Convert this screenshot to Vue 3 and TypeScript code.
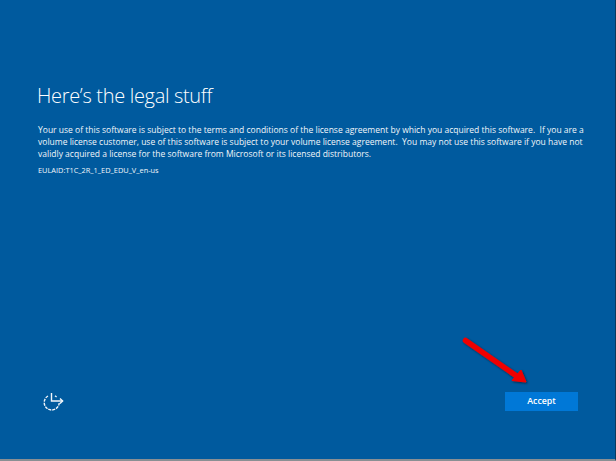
<script setup lang="ts">
const paragraph =
  "Your use of this software is subject to the terms and conditions of the license agreement by which you acquired this software.  If you are a volume license customer, use of this software is subject to your volume license agreement.  You may not use this software if you have not validly acquired a license for the software from Microsoft or its licensed distributors.";
</script>

<template>
  <div class="screen">
    <main class="content">
      <h1 class="title">Here’s the legal stuff</h1>
      <p class="body">{{ paragraph }}</p>
      <p class="eula">EULAID:T1C_2R_1_ED_EDU_V_en-us</p>
    </main>
    <footer class="footer">
      <svg class="ease" width="24" height="24" viewBox="0 0 24 24" fill="none" stroke="#f2f6fa" stroke-width="1.4">
        <path d="M7 7a7.5 7.5 0 1 0 11.2 7" stroke-dasharray="3 1" />
        <path d="M10.5 4v8H21.5" />
        <path d="M19 9.6l2.6 2.4-2.6 2.4" />
        <path d="M14 6.8l1.6 1.2" />
      </svg>
      <button class="accept" type="button">Accept</button>
    </footer>
    <svg class="arrow" width="80" height="60" viewBox="0 0 80 60">
      <defs>
        <filter id="arrow-shadow" x="-20%" y="-20%" width="150%" height="150%">
          <feDropShadow dx="1" dy="1" stdDeviation="0.9" flood-color="#000" flood-opacity="0.55" />
        </filter>
      </defs>
      <g filter="url(#arrow-shadow)">
        <path d="M3.5 3.5 L56 40" stroke="#f00000" stroke-width="5.5" stroke-linecap="round" fill="none" />
        <path d="M64 45 L50 43.5 L59 33 Z" fill="#f00000" stroke="#f00000" stroke-linejoin="round" />
      </g>
    </svg>
  </div>
</template>

<style>
html,
body {
  margin: 0;
  background: #005a9e;
}
</style>

<style scoped>
.screen {
  position: relative;
  box-sizing: border-box;
  width: 616px;
  height: 461px;
  display: flex;
  flex-direction: column;
  justify-content: space-between;
  padding: 83px 0 0;
  background: #005a9e;
  border-right: 1px solid #0b3a5e;
  border-bottom: 2px solid #8a8f93;
  color: #fff;
  font-family: "Open Sans", "Liberation Sans", sans-serif;
  overflow: hidden;
}
.content {
  padding: 0 24px 0 38px;
}
.title {
  margin: 0 0 15px -1px;
  font-size: 20px;
  line-height: 26px;
  font-weight: 300;
  letter-spacing: -0.32px;
  color: #fff;
}
.body {
  margin: 0;
  font-size: 8.52px;
  line-height: 12px;
  white-space: pre-wrap;
  color: #f2f6fa;
}
.eula {
  margin: 4px 0 0;
  font-size: 7.4px;
  line-height: 12px;
  color: #f2f6fa;
}
.footer {
  display: flex;
  align-items: center;
  justify-content: space-between;
  padding: 0 37px 46px 41px;
}
.ease {
  display: block;
}
.accept {
  width: 73px;
  height: 19px;
  padding: 0;
  border: 0;
  background: #0078d7;
  color: #fff;
  font-family: inherit;
  font-size: 8.8px;
  font-weight: 600;
}
.arrow {
  position: absolute;
  left: 462px;
  top: 337px;
}
</style>
